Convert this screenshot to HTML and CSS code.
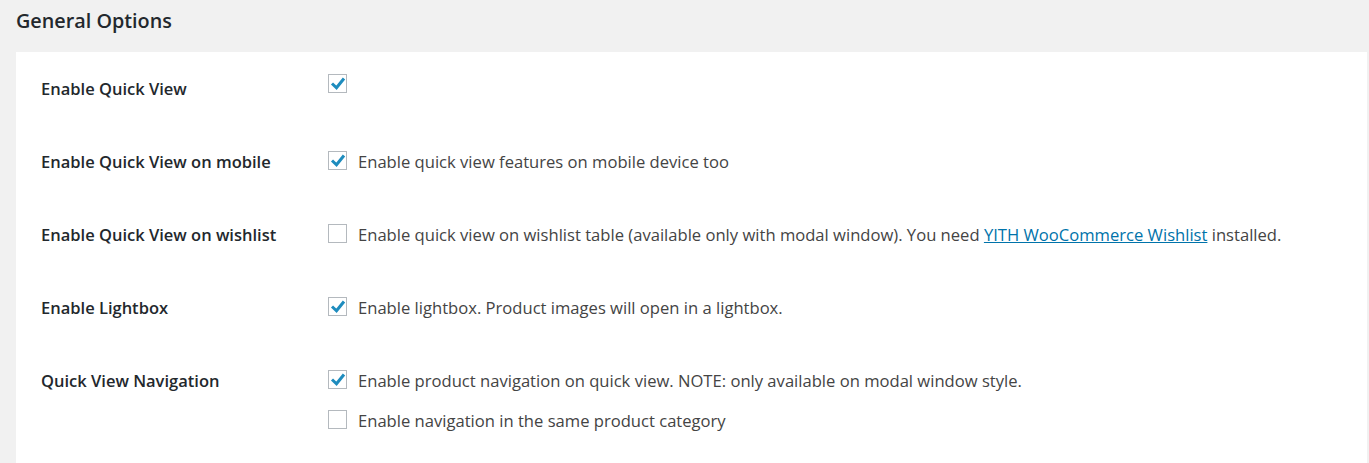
FILE: index.html
```html
<!DOCTYPE html>
<html>
<head>
<meta charset="utf-8">
<link rel="stylesheet" href="styles.css">
</head>
<body>
<h2 class="title">General Options</h2>
<div class="panel">
  <div class="row">
    <div class="label">Enable Quick View</div>
    <div class="field">
      <label class="opt"><svg class="cb" viewBox="0 0 19 19"><rect class="box" x="0.5" y="0.5" width="18" height="18"/><path class="tick" d="M4 9.5 L8.5 13.8 L16 4.5"/></svg></label>
    </div>
  </div>
  <div class="row">
    <div class="label">Enable Quick View on mobile</div>
    <div class="field">
      <label class="opt"><svg class="cb" viewBox="0 0 19 19"><rect class="box" x="0.5" y="0.5" width="18" height="18"/><path class="tick" d="M4 9.5 L8.5 13.8 L16 4.5"/></svg><span class="desc">Enable quick view features on mobile device too</span></label>
    </div>
  </div>
  <div class="row">
    <div class="label">Enable Quick View on wishlist</div>
    <div class="field">
      <label class="opt"><svg class="cb" viewBox="0 0 19 19"><rect class="box" x="0.5" y="0.5" width="18" height="18"/></svg><span class="desc">Enable quick view on wishlist table (available only with modal window). You need <a href="#" class="link">YITH WooCommerce Wishlist</a> installed.</span></label>
    </div>
  </div>
  <div class="row">
    <div class="label">Enable Lightbox</div>
    <div class="field">
      <label class="opt"><svg class="cb" viewBox="0 0 19 19"><rect class="box" x="0.5" y="0.5" width="18" height="18"/><path class="tick" d="M4 9.5 L8.5 13.8 L16 4.5"/></svg><span class="desc">Enable lightbox. Product images will open in a lightbox.</span></label>
    </div>
  </div>
  <div class="row">
    <div class="label">Quick View Navigation</div>
    <div class="field stack">
      <label class="opt"><svg class="cb" viewBox="0 0 19 19"><rect class="box" x="0.5" y="0.5" width="18" height="18"/><path class="tick" d="M4 9.5 L8.5 13.8 L16 4.5"/></svg><span class="desc">Enable product navigation on quick view. NOTE: only available on modal window style.</span></label>
      <label class="opt"><svg class="cb" viewBox="0 0 19 19"><rect class="box" x="0.5" y="0.5" width="18" height="18"/></svg><span class="desc">Enable navigation in the same product category</span></label>
    </div>
  </div>
</div>
</body>
</html>
```
FILE: styles.css
```css
html, body {
  margin: 0;
  padding: 0;
  background: #f1f1f1;
}
body {
  font-family: "Open Sans", "Noto Sans", sans-serif;
  color: #444;
  overflow: hidden;
}
.title {
  margin: 0;
  padding: 8px 16px 0 16px;
  height: 52px;
  box-sizing: border-box;
  font-size: 19.8px;
  font-weight: 600;
  color: #23282d;
  line-height: 26px;
}
.panel {
  background: #fff;
  margin: 0 2px 0 16px;
  padding: 0 25px;
  min-height: 420px;
}
.row {
  display: grid;
  grid-template-columns: 288px 1fr;
  padding: 24px 0;
  line-height: 25px;
}
.label {
  font-size: 16.5px;
  font-weight: 600;
  color: #23282d;
}
.field.stack {
  display: flex;
  flex-direction: column;
  gap: 15px;
}
.opt {
  display: flex;
  align-items: center;
  gap: 11px;
  font-size: 16.6px;
  color: #444;
}
.cb {
  width: 19px;
  height: 19px;
  flex: none;
  margin-top: -2px;
  margin-left: -1px;
}
.cb .box {
  fill: #fff;
  stroke: #b4b9be;
  stroke-width: 1;
}
.cb .tick {
  fill: none;
  stroke: #1e8cbe;
  stroke-width: 3;
  stroke-linecap: butt;
  stroke-linejoin: miter;
}
.link {
  color: #0073aa;
  text-decoration: underline;
}
```
